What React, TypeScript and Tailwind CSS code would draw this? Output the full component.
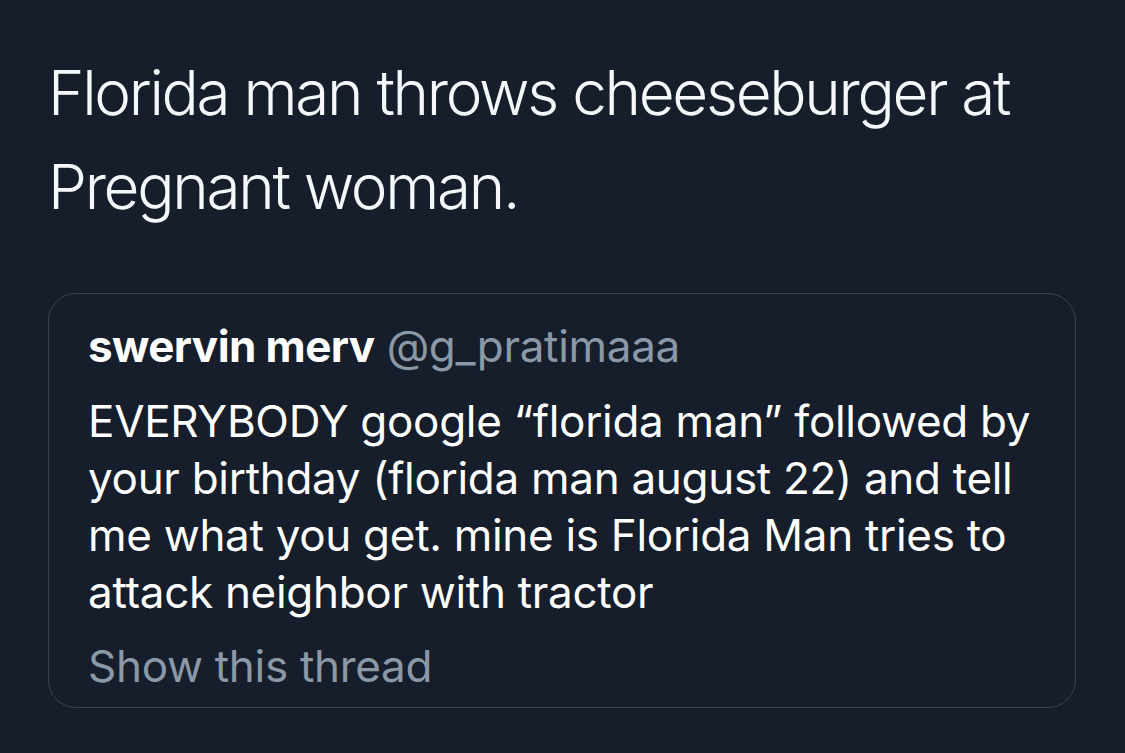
import React from "react";

export default function App() {
  return (
    <div
      className="w-[1125px] h-[753px] bg-[#161e2b] text-white overflow-hidden"
      style={{ fontFamily: "Inter, 'Liberation Sans', sans-serif" }}
    >
      <div className="pl-[48px] pr-[40px] pt-[46px]">
        <div className="text-[62px] leading-[94px] font-light tracking-[-2.3px] text-[#f5f8fa] whitespace-nowrap">
          Florida man throws cheeseburger at
          <br />
          Pregnant woman.
        </div>
        <div className="mt-[59px] w-[1028px] h-[415px] rounded-[28px] border border-[#3a4450] pl-[39px] pr-[20px] pt-[24px]">
          <div className="text-[44px] leading-[57px] whitespace-nowrap tracking-[-0.3px]">
            <span className="font-bold text-white tracking-[-0.6px]">swervin merv</span>{" "}
            <span className="font-normal text-[#8b98a5]">@g_pratimaaa</span>
          </div>
          <div className="mt-[18px] text-[44px] leading-[57px] text-white whitespace-nowrap tracking-[-0.3px]">
            EVERYBODY google “florida man” followed by
            <br />
            your birthday (florida man august 22) and tell
            <br />
            me what you get. mine is Florida Man tries to
            <br />
            attack neighbor with tractor
          </div>
          <div className="mt-[17px] text-[44px] leading-[57px] text-[#8b98a5] tracking-[-0.3px]">
            Show this thread
          </div>
        </div>
      </div>
    </div>
  );
}
